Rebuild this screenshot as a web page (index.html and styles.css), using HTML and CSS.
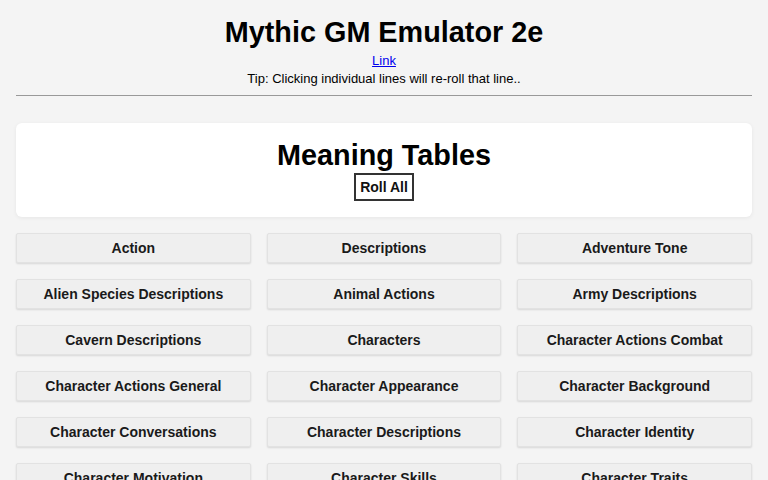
FILE: index.html
```html
<!DOCTYPE html>
<html lang="en">
<head>
    <meta charset="UTF-8">
    <meta name="viewport" content="width=device-width, initial-scale=1.0">
    <title>Mythic GM Emulator 2e</title>
    <link rel="stylesheet" href="styles.css">
</head>
<body>
    <div class="header">
        <h1>Mythic GM Emulator 2e</h1>
        <p class="link"><a href="#">Link</a></p>
        <p class="tip">Tip: Clicking individual lines will re-roll that line..</p>
    </div>
    <hr>

    <div class="card">
        <h2>Meaning Tables</h2>
        <button class="roll-all">Roll All</button>
    </div>

    <div class="tables">
        <button class="table-btn">Action</button>
        <button class="table-btn">Descriptions</button>
        <button class="table-btn">Adventure Tone</button>
        <button class="table-btn">Alien Species Descriptions</button>
        <button class="table-btn">Animal Actions</button>
        <button class="table-btn">Army Descriptions</button>
        <button class="table-btn">Cavern Descriptions</button>
        <button class="table-btn">Characters</button>
        <button class="table-btn">Character Actions Combat</button>
        <button class="table-btn">Character Actions General</button>
        <button class="table-btn">Character Appearance</button>
        <button class="table-btn">Character Background</button>
        <button class="table-btn">Character Conversations</button>
        <button class="table-btn">Character Descriptions</button>
        <button class="table-btn">Character Identity</button>
        <button class="table-btn">Character Motivation</button>
        <button class="table-btn">Character Skills</button>
        <button class="table-btn">Character Traits</button>
        <button class="table-btn">City Descriptions</button>
        <button class="table-btn">Civilization Descriptions</button>
        <button class="table-btn">Creature Abilities</button>
    </div>
</body>
</html>
```

FILE: styles.css
```css
body {
    font-family: 'Liberation Sans', Arial, sans-serif;
    background-color: #f4f4f4;
    color: #000;
    margin: 0;
    padding: 16px;
}
.header {
    text-align: center;
}
.header h1 {
    font-size: 1.8rem;
    margin: 0 0 4px;
}
.header p {
    font-size: 13px;
    margin: 0 0 3px;
}
.header a {
    color: #0000ee;
}
hr {
    border: 0;
    border-top: 1px solid #999;
    margin: 9px 0 27px;
}
.card {
    background-color: #fff;
    border-radius: 6px;
    box-shadow: 0 1px 4px rgba(0, 0, 0, 0.06);
    padding: 16px;
    text-align: center;
    margin-bottom: 16px;
}
.card h2 {
    font-size: 1.8rem;
    margin: 0 0 1px;
}
.roll-all {
    font-family: inherit;
    font-size: 14px;
    font-weight: bold;
    background-color: #fff;
    color: #111;
    border: 2px solid #333;
    padding: 4px;
    line-height: 16px;
    cursor: pointer;
}
.tables {
    display: grid;
    grid-template-columns: repeat(3, 1fr);
    gap: 16px;
}
.table-btn {
    font-family: inherit;
    font-size: 14px;
    font-weight: bold;
    color: #1a1a1a;
    background-color: #efefef;
    border: 1px solid #e2e2e2;
    border-radius: 2px;
    box-shadow: 0 1px 2px rgba(0, 0, 0, 0.12);
    height: 30px;
    padding: 0 8px;
    cursor: pointer;
}
```
